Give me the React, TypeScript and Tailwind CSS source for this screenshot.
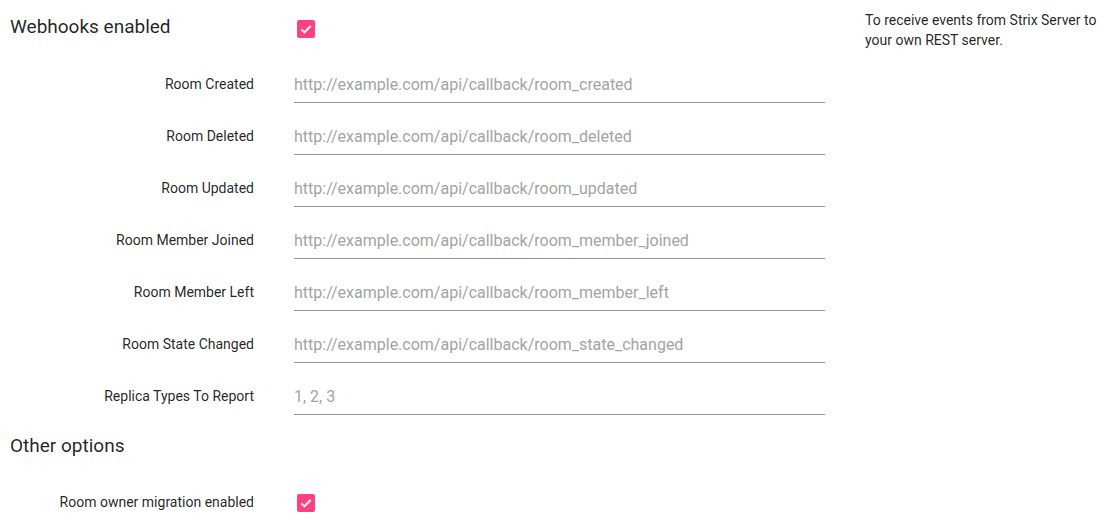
import React from 'react';

const fields = [
  { label: 'Room Created', placeholder: 'http://example.com/api/callback/room_created' },
  { label: 'Room Deleted', placeholder: 'http://example.com/api/callback/room_deleted' },
  { label: 'Room Updated', placeholder: 'http://example.com/api/callback/room_updated' },
  { label: 'Room Member Joined', placeholder: 'http://example.com/api/callback/room_member_joined' },
  { label: 'Room Member Left', placeholder: 'http://example.com/api/callback/room_member_left' },
  { label: 'Room State Changed', placeholder: 'http://example.com/api/callback/room_state_changed' },
  { label: 'Replica Types To Report', placeholder: '1, 2, 3' },
];

function Checkbox() {
  return (
    <span className="flex h-[18px] w-[18px] items-center justify-center rounded-[2px] bg-[#ff4081]">
      <svg viewBox="0 0 24 24" className="h-[16px] w-[16px]" fill="none" stroke="white" strokeWidth="3">
        <path d="M5 12.5l4.5 4.5L19 7.5" />
      </svg>
    </span>
  );
}

export default function App() {
  return (
    <div className="flex bg-white text-[rgba(0,0,0,0.87)]" style={{ fontFamily: 'Roboto, sans-serif' }}>
      <div className="w-[825px]">
        {/* Webhooks section */}
        <div className="flex h-[58px] items-center pb-[4px]">
          <h2 className="w-[297px] pl-[10px] text-[19px]">Webhooks enabled</h2>
          <span className="mt-[4px]">
            <Checkbox />
          </span>
        </div>

        {fields.map((f) => (
          <div key={f.label} className="flex h-[52px] items-start">
            <label className="w-[254px] self-center text-right text-[14px]">{f.label}</label>
            <div className="ml-[40px] mt-[9px] flex h-[36px] flex-1 items-center border-b border-[#949494]">
              <input
                className="w-full bg-transparent text-[16px] outline-none placeholder:text-[#a3a3a3]"
                placeholder={f.placeholder}
              />
            </div>
          </div>
        ))}

        {/* Other options */}
        <div className="flex h-[48px] items-center">
          <h2 className="pl-[10px] text-[19px]">Other options</h2>
        </div>
        <div className="mt-[6px] flex h-[52px] items-center">
          <label className="w-[254px] text-right text-[14px]">Room owner migration enabled</label>
          <span className="ml-[43px] mt-[1px]">
            <Checkbox />
          </span>
        </div>
      </div>

      <div className="ml-[40px] w-[245px] pt-[10px] text-[14px] leading-[20px]">
        To receive events from Strix Server to your own REST server.
      </div>
    </div>
  );
}
